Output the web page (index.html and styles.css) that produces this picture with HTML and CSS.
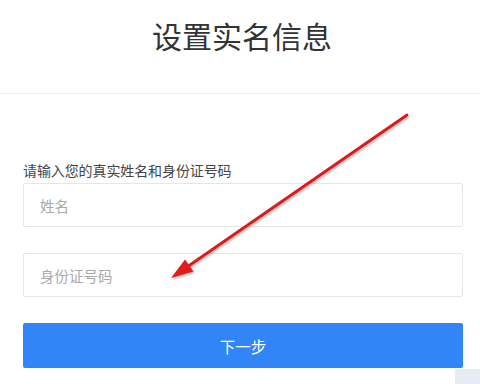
FILE: index.html
```html
<!DOCTYPE html>
<html lang="zh-CN">
<head>
<meta charset="utf-8">
<link rel="stylesheet" href="styles.css">
</head>
<body>
<div class="page">
  <header class="header">
    <h1 class="title">设置实名信息</h1>
  </header>
  <form class="form">
    <p class="hint">请输入您的真实姓名和身份证号码</p>
    <div class="field"><span class="placeholder">姓名</span></div>
    <div class="field"><span class="placeholder">身份证号码</span></div>
    <div class="btn">下一步</div>
  </form>
  <svg class="arrow" width="480" height="384" viewBox="0 0 480 384">
    <defs>
      <filter id="sh" x="-10%" y="-10%" width="120%" height="120%">
        <feDropShadow dx="1" dy="1.5" stdDeviation="1" flood-color="#000" flood-opacity="0.3"/>
      </filter>
    </defs>
    <g filter="url(#sh)">
      <line x1="407" y1="115" x2="187" y2="267" stroke="#d81c1c" stroke-width="2.8" stroke-linecap="round"/>
      <polygon points="171,278 185,259.5 193.5,271.5" fill="#e01e1e"/>
    </g>
  </svg>
  <div class="corner"></div>
</div>
</body>
</html>
```

FILE: styles.css
```css
html, body {
  margin: 0;
  padding: 0;
  background: #ffffff;
}
body {
  font-family: "Noto Sans CJK SC", "Noto Sans", sans-serif;
  width: 480px;
  height: 384px;
  overflow: hidden;
}
.page {
  position: relative;
  width: 480px;
  height: 384px;
}
.header {
  height: 94px;
  box-sizing: border-box;
  padding-top: 19px;
  border-bottom: 1px solid #eeeeee;
}
.title {
  margin: 0;
  text-align: center;
  font-size: 30px;
  line-height: 32px;
  font-weight: 400;
  color: #333333;
  padding-left: 4px;
}
.form {
  margin: 0;
  padding: 0 17px 0 23px;
  display: flex;
  flex-direction: column;
}
.hint {
  margin: 66px 0 3px 0;
  font-size: 14px;
  line-height: 20px;
  color: #444444;
  letter-spacing: -0.1px;
}
.field {
  height: 44px;
  box-sizing: border-box;
  border: 1px solid #e6e6e6;
  border-radius: 2px;
  display: flex;
  align-items: center;
  padding-left: 16px;
  margin-bottom: 26px;
}
.placeholder {
  font-size: 14.5px;
  color: #a9a9a9;
}
.btn {
  height: 45px;
  background: #3285f7;
  border-radius: 2px;
  color: #ffffff;
  font-size: 15.5px;
  display: flex;
  align-items: center;
  justify-content: center;
}
.arrow {
  position: absolute;
  left: 0;
  top: 0;
  pointer-events: none;
}
.corner {
  position: absolute;
  right: 0;
  bottom: 0;
  width: 25px;
  height: 15px;
  background: #e7ebf4;
}
```
